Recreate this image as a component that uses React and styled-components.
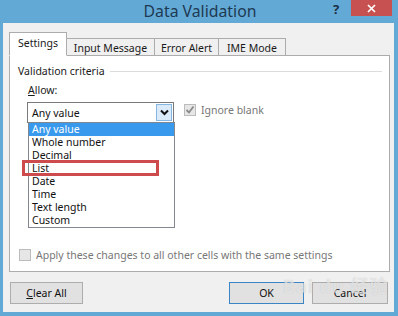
import React from "react";
import styled, { createGlobalStyle } from "styled-components";

const Global = createGlobalStyle`
  html, body { margin: 0; padding: 0; background: #fff; }
  body { font-family: "Noto Sans", "Open Sans", sans-serif; }
  * { box-sizing: border-box; }
`;

const FS = "10.5px";

const Frame = styled.div`
  width: 398px;
  height: 316px;
  background: #63a9d6;
  display: flex;
  flex-direction: column;
  position: relative;
  overflow: hidden;
`;

const TitleBar = styled.div`
  height: 23px;
  flex: none;
  display: flex;
  align-items: flex-start;
  position: relative;
`;

const Title = styled.div`
  flex: 1;
  text-align: center;
  font-size: 15.8px;
  line-height: 23px;
  color: #1d3a52;
  padding-left: 2px;
`;

const Controls = styled.div`
  position: absolute;
  right: 6px;
  top: 0;
  display: flex;
  align-items: flex-start;
`;

const Help = styled.div`
  width: 14px;
  margin-right: 8px;
  margin-top: 1px;
  font-size: 13px;
  font-weight: bold;
  color: #1b2f44;
  text-align: center;
  line-height: 16px;
`;

const Close = styled.div`
  width: 41px;
  height: 16px;
  background: #c75050;
  display: flex;
  align-items: center;
  justify-content: center;
`;

const Body = styled.div`
  flex: 1;
  margin: 0 4px 4px 3px;
  background: #f0f0f0;
  display: flex;
  flex-direction: column;
  padding: 10px 4px 8px 6px;
`;

const TabRow = styled.div`
  display: flex;
  align-items: flex-end;
  height: 23px;
  flex: none;
  position: relative;
  z-index: 1;
  margin-bottom: -1px;
`;

const Tab = styled.div`
  width: ${(p) => p.$w}px;
  height: ${(p) => (p.$active ? 24 : 18)}px;
  border: 1px solid #acacac;
  border-left-width: ${(p) => (p.$first ? 1 : 0)}px;
  border-bottom-color: ${(p) => (p.$active ? "#fff" : "#acacac")};
  background: ${(p) => (p.$active ? "#fff" : "#f0f0f0")};
  font-size: ${FS};
  color: #1a1a1a;
  display: flex;
  align-items: center;
  justify-content: center;
  padding-top: ${(p) => (p.$active ? 0 : 1)}px;
  ${(p) => (p.$active ? "padding-bottom: 2px;" : "")}
`;

const Panel = styled.div`
  flex: 1;
  background: #fff;
  border: 1px solid #acacac;
  position: relative;
  display: flex;
  flex-direction: column;
  padding: 7px 7px 9px 8px;
`;

const GroupHead = styled.div`
  display: flex;
  align-items: center;
  gap: 5px;
  font-size: ${FS};
  color: #1a1a1a;
  height: 16px;
`;

const GroupLine = styled.div`
  flex: 1;
  height: 1px;
  background: #dcdcdc;
`;

const Label = styled.div`
  font-size: ${FS};
  color: #1a1a1a;
  margin: 3px 0 0 10px;
  height: 16px;
  line-height: 16px;
`;

const U = styled.span`
  text-decoration: underline;
`;

const ComboRow = styled.div`
  display: flex;
  align-items: flex-start;
  margin: 4px 0 0 9px;
  gap: 10px;
`;

const Combo = styled.div`
  width: 147px;
  height: 21px;
  border: 1px solid #7a7a7a;
  background: #fff;
  display: flex;
  align-items: center;
  padding: 1px 1px 1px 4px;
  font-size: ${FS};
  color: #111;
`;

const ComboText = styled.div`
  flex: 1;
`;

const DropBtn = styled.div`
  width: 16px;
  height: 17px;
  background: #dbeaf8;
  border: 1px solid #86b7e3;
  display: flex;
  align-items: center;
  justify-content: center;
`;

const CheckLine = styled.label`
  display: flex;
  align-items: center;
  gap: 5px;
  font-size: ${FS};
  color: ${(p) => (p.$dim ? "#777" : "#1a1a1a")};
  margin-top: ${(p) => p.$mt || 0}px;
  margin-left: ${(p) => p.$ml || 0}px;
`;

const Box = styled.span`
  width: 12px;
  height: 12px;
  border: 1px solid #bcbcbc;
  background: #e6e6e6;
  display: inline-flex;
  align-items: center;
  justify-content: center;
`;

const Spacer = styled.div`
  flex: 1;
`;

const DropList = styled.div`
  position: absolute;
  left: 18px;
  top: 66px;
  width: 147px;
  border: 1px solid #828790;
  background: #fff;
  z-index: 2;
`;

const Option = styled.div`
  height: 13px;
  line-height: 13px;
  padding-left: 3px;
  font-size: ${FS};
  overflow: hidden;
  background: ${(p) => (p.$sel ? "#3999ec" : "#fff")};
  color: ${(p) => (p.$sel ? "#fff" : "#111")};
`;

const Mark = styled.div`
  position: absolute;
  left: 12px;
  top: 104px;
  width: 137px;
  height: 16px;
  border: 3px solid #cd4b4c;
  z-index: 3;
`;

const ButtonRow = styled.div`
  display: flex;
  align-items: center;
  margin-top: 10px;
  padding-left: 1px;
  flex: none;
`;

const Button = styled.div`
  width: ${(p) => p.$w}px;
  height: 22px;
  margin-left: ${(p) => p.$ml || 0}px;
  background: #e1e1e1;
  border: 1px solid ${(p) => (p.$def ? "#3b85c4" : "#adadad")};
  display: flex;
  align-items: center;
  justify-content: center;
  font-size: ${FS};
  color: #111;
`;

const Watermark = styled.div`
  position: absolute;
  left: 283px;
  top: 272px;
  font-size: 18px;
  font-weight: bold;
  color: rgba(255, 255, 255, 0.5);
  letter-spacing: 1px;
  font-family: "Noto Sans", "Noto Sans CJK SC", sans-serif;
  text-shadow: 0 0 1px rgba(150, 150, 150, 0.45);
  pointer-events: none;
  z-index: 4;
`;

const Chevron = () => (
  <svg width="9" height="7" viewBox="0 0 9 7">
    <path d="M1 1.5 L4.5 5 L8 1.5" fill="none" stroke="#111" strokeWidth="2" />
  </svg>
);

const Check = ({ color }) => (
  <svg width="10" height="10" viewBox="0 0 10 10">
    <path d="M1.5 5 L4 7.5 L8.5 1.5" fill="none" stroke={color} strokeWidth="1.8" />
  </svg>
);

const options = ["Any value", "Whole number", "Decimal", "List", "Date", "Time", "Text length", "Custom"];

export default function App() {
  return (
    <>
      <Global />
      <Frame>
        <TitleBar>
          <Title>Data Validation</Title>
          <Controls>
            <Help>?</Help>
            <Close>
              <svg width="9" height="9" viewBox="0 0 9 9">
                <path d="M1 1 L8 8 M8 1 L1 8" stroke="#fff" strokeWidth="1.7" />
              </svg>
            </Close>
          </Controls>
        </TitleBar>
        <Body>
          <TabRow>
            <Tab $active $first $w={58}>Settings</Tab>
            <Tab $w={88}>Input Message</Tab>
            <Tab $w={64}>Error Alert</Tab>
            <Tab $w={67}>IME Mode</Tab>
          </TabRow>
          <Panel>
            <GroupHead>
              Validation criteria
              <GroupLine />
            </GroupHead>
            <Label>
              <U>A</U>llow:
            </Label>
            <ComboRow>
              <Combo>
                <ComboText>Any value</ComboText>
                <DropBtn>
                  <Chevron />
                </DropBtn>
              </Combo>
              <CheckLine $dim $mt={1}>
                <Box>
                  <Check color="#8a8a8a" />
                </Box>
                Ignore blank
              </CheckLine>
            </ComboRow>
            <Spacer />
            <CheckLine $dim $ml={1}>
              <Box />
              Apply these changes to all other cells with the same settings
            </CheckLine>
            <DropList>
              {options.map((o, i) => (
                <Option key={o} $sel={i === 0}>
                  {o}
                </Option>
              ))}
            </DropList>
            <Mark />
          </Panel>
          <ButtonRow>
            <Button $w={73}>
              <span>
                <U>C</U>lear All
              </span>
            </Button>
            <Button $w={75} $ml={146} $def>
              OK
            </Button>
            <Button $w={76} $ml={8}>
              Cancel
            </Button>
          </ButtonRow>
        </Body>
        <Watermark>Bai du 经验</Watermark>
      </Frame>
    </>
  );
}
